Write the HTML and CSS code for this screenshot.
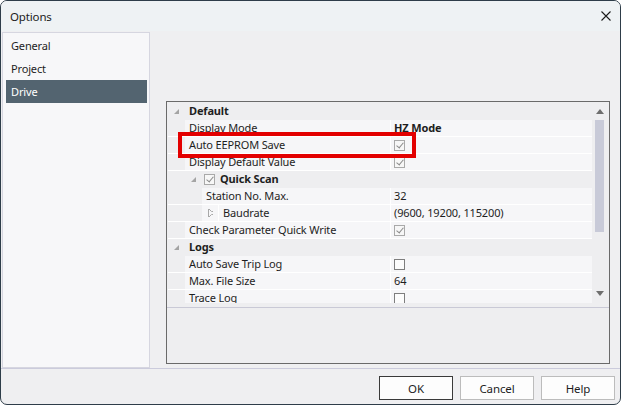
FILE: index.html
```html
<!DOCTYPE html>
<html>
<head>
  <meta charset="utf-8">
  <title>Options</title>
  <link rel="stylesheet" href="styles.css">
</head>
<body>
<div class="window">
  <div class="titlebar">
    <span class="title">Options</span>
    <svg class="close" width="10" height="10" viewBox="0 0 10 10">
      <path d="M0.5 0.5 L9.5 9.5 M9.5 0.5 L0.5 9.5" stroke="#1b1b1b" stroke-width="1.1" fill="none"/>
    </svg>
  </div>

  <div class="main">
    <ul class="nav">
      <li>General</li>
      <li>Project</li>
      <li class="active">Drive</li>
    </ul>

    <div class="content">
      <div class="grid">
        <div class="grid-top">
          <div class="rows">
            <div class="row cat">
              <span class="gutter"><i class="tri-open"></i></span>
              <span class="label">Default</span>
            </div>
            <div class="row">
              <span class="gutter"></span>
              <span class="label">Display Mode</span>
              <span class="value bold">HZ Mode</span>
            </div>
            <div class="row">
              <span class="gutter"></span>
              <span class="label">Auto EEPROM Save</span>
              <span class="value"><i class="check on"></i></span>
            </div>
            <div class="row">
              <span class="gutter"></span>
              <span class="label">Display Default Value</span>
              <span class="value"><i class="check on"></i></span>
            </div>
            <div class="row cat">
              <span class="gutter"></span>
              <span class="gutter"><i class="tri-open"></i></span>
              <span class="label sub-cat"><i class="check on"></i>Quick Scan</span>
            </div>
            <div class="row">
              <span class="gutter wide"></span>
              <span class="label">Station No. Max.</span>
              <span class="value">32</span>
            </div>
            <div class="row">
              <span class="gutter wide"></span>
              <span class="expander"><i class="tri-closed"></i></span>
              <span class="label">Baudrate</span>
              <span class="value">(9600, 19200, 115200)</span>
            </div>
            <div class="row">
              <span class="gutter"></span>
              <span class="label">Check Parameter Quick Write</span>
              <span class="value"><i class="check on"></i></span>
            </div>
            <div class="row cat">
              <span class="gutter"><i class="tri-open"></i></span>
              <span class="label">Logs</span>
            </div>
            <div class="row">
              <span class="gutter"></span>
              <span class="label">Auto Save Trip Log</span>
              <span class="value"><i class="check"></i></span>
            </div>
            <div class="row">
              <span class="gutter"></span>
              <span class="label">Max. File Size</span>
              <span class="value">64</span>
            </div>
            <div class="row">
              <span class="gutter"></span>
              <span class="label">Trace Log</span>
              <span class="value"><i class="check"></i></span>
            </div>
          </div>
          <div class="scrollbar">
            <i class="arrow-up"></i>
            <div class="thumb"></div>
            <i class="arrow-down"></i>
          </div>
        </div>
        <div class="description"></div>
        <div class="highlight"></div>
      </div>
    </div>
  </div>

  <div class="footer">
    <button class="default">OK</button>
    <button>Cancel</button>
    <button>Help</button>
  </div>
</div>
</body>
</html>
```

FILE: styles.css
```css
/* window frame */
body {
  margin: 0;
  background: #ffffff;
  font-family: "Noto Sans", "Open Sans", sans-serif;
  font-size: 11px;
  letter-spacing: -0.15px;
  color: #1e1e1e;
}
.window {
  width: 621px;
  height: 405px;
  box-sizing: border-box;
  border: 1px solid #2e3d49;
  border-radius: 7px;
  overflow: hidden;
  background: #efeff1;
  display: flex;
  flex-direction: column;
}
.titlebar {
  height: 30px;
  flex: none;
  background: #eef2f4;
  display: flex;
  align-items: center;
  justify-content: space-between;
  padding: 0 9px 0 9px;
}
.title {
  font-size: 11.5px;
  color: #1b1b1b;
}
.close {
  display: block;
}

/* main area */
.main {
  height: 337px;
  flex: none;
  display: flex;
  border-bottom: 1px solid #cbcbdc;
}
.nav {
  list-style: none;
  margin: 1px 0 0 1px;
  padding: 1px 2px 0 3px;
  width: 148px;
  box-sizing: border-box;
  background: #f7f7f9;
  border: 1px solid #d6d6e0;
}
.nav li {
  height: 23px;
  line-height: 23px;
  padding-left: 5px;
}
.nav li.active {
  background: #536470;
  color: #ffffff;
}
.content {
  flex: 1;
  padding: 70px 10px 4px 16px;
}

/* property grid */
.grid {
  position: relative;
  height: 263px;
  box-sizing: border-box;
  border: 1px solid #6a6a6a;
  background: #eeeef0;
  display: flex;
  flex-direction: column;
}
.grid-top {
  display: flex;
  padding: 1px 0 0 1px;
  height: 200px;
  flex: none;
}
.rows {
  width: 424px;
  height: 200px;
  overflow: hidden;
}
.row {
  display: flex;
  height: 16px;
  line-height: 16px;
  border-bottom: 1px solid #ffffff;
}
.row.cat {
  border-bottom-color: #eeeef0;
  font-weight: bold;
}
.gutter {
  width: 17px;
  flex: none;
  position: relative;
}
.gutter.wide {
  width: 34px;
}
.label {
  flex: 1;
  background: #f6f6f8;
  padding-left: 4px;
  white-space: nowrap;
  overflow: hidden;
}
.row.cat .label {
  background: none;
}
.expander {
  width: 16px;
  flex: none;
  background: #f6f6f8;
  border-right: 1px solid #ffffff;
  position: relative;
}
.value {
  width: 198px;
  flex: none;
  background: #f6f6f8;
  border-left: 1px solid #ffffff;
  padding-left: 3px;
  display: flex;
  align-items: center;
  white-space: nowrap;
}
.bold {
  font-weight: bold;
}
.sub-cat {
  display: flex;
  align-items: center;
  padding-left: 2px;
}
.sub-cat .check {
  margin-right: 5px;
}

/* little glyphs */
.tri-open {
  position: absolute;
  left: 6px;
  top: 6px;
  width: 0;
  height: 0;
  border-left: 5px solid transparent;
  border-bottom: 5px solid #a4a4a4;
}
.tri-closed {
  position: absolute;
  left: 6px;
  top: 4px;
  width: 5px;
  height: 8px;
  background:
    linear-gradient(to top right, transparent 48%, #a8a8a8 49%, #a8a8a8 60%, transparent 61%) top / 5px 4px no-repeat,
    linear-gradient(to bottom right, transparent 48%, #a8a8a8 49%, #a8a8a8 60%, transparent 61%) bottom / 5px 4px no-repeat;
  border-left: 1px solid #a8a8a8;
  box-sizing: border-box;
}
.check {
  display: block;
  width: 11px;
  height: 11px;
  box-sizing: border-box;
  border: 1px solid #7e7e7e;
  background: #fcfcfc;
  position: relative;
}
.check.on {
  border-color: #a9a9a9;
  background: #f7f7f7;
}
.check.on::after {
  content: "";
  position: absolute;
  left: 3px;
  top: 0px;
  width: 3px;
  height: 6px;
  border: solid #8a8a8a;
  border-width: 0 1.5px 1.5px 0;
  transform: rotate(40deg);
}

/* scrollbar */
.scrollbar {
  width: 17px;
  flex: none;
  position: relative;
}
.arrow-up,
.arrow-down {
  position: absolute;
  left: 4px;
  width: 0;
  height: 0;
  border-left: 4px solid transparent;
  border-right: 4px solid transparent;
}
.arrow-up {
  top: 6px;
  border-bottom: 5px solid #6e6e6e;
}
.arrow-down {
  top: 188px;
  border-top: 5px solid #6e6e6e;
}
.thumb {
  position: absolute;
  left: 3px;
  top: 17px;
  width: 9px;
  height: 112px;
  background: #c8cad8;
}
.description {
  margin-top: 4px;
  flex: 1;
  border-top: 1px solid #c9c9d6;
}

/* red marker drawn over the grid */
.highlight {
  position: absolute;
  left: 11px;
  top: 30px;
  width: 238px;
  height: 26px;
  box-sizing: border-box;
  border: 4px solid #e30000;
}

/* dialog buttons */
.footer {
  flex: 1;
  display: flex;
  justify-content: flex-end;
  align-items: flex-start;
  gap: 7px;
  padding: 7px 5px 0 0;
}
button {
  width: 74px;
  height: 24px;
  font-family: "Noto Sans", "Open Sans", sans-serif;
  font-size: 11.5px;
  letter-spacing: -0.1px;
  color: #1e1e1e;
  background: #fdfdfd;
  border: 1px solid #bcbcbc;
  border-radius: 0;
  padding: 0;
}
button.default {
  border-color: #3a3a3a;
}
```
